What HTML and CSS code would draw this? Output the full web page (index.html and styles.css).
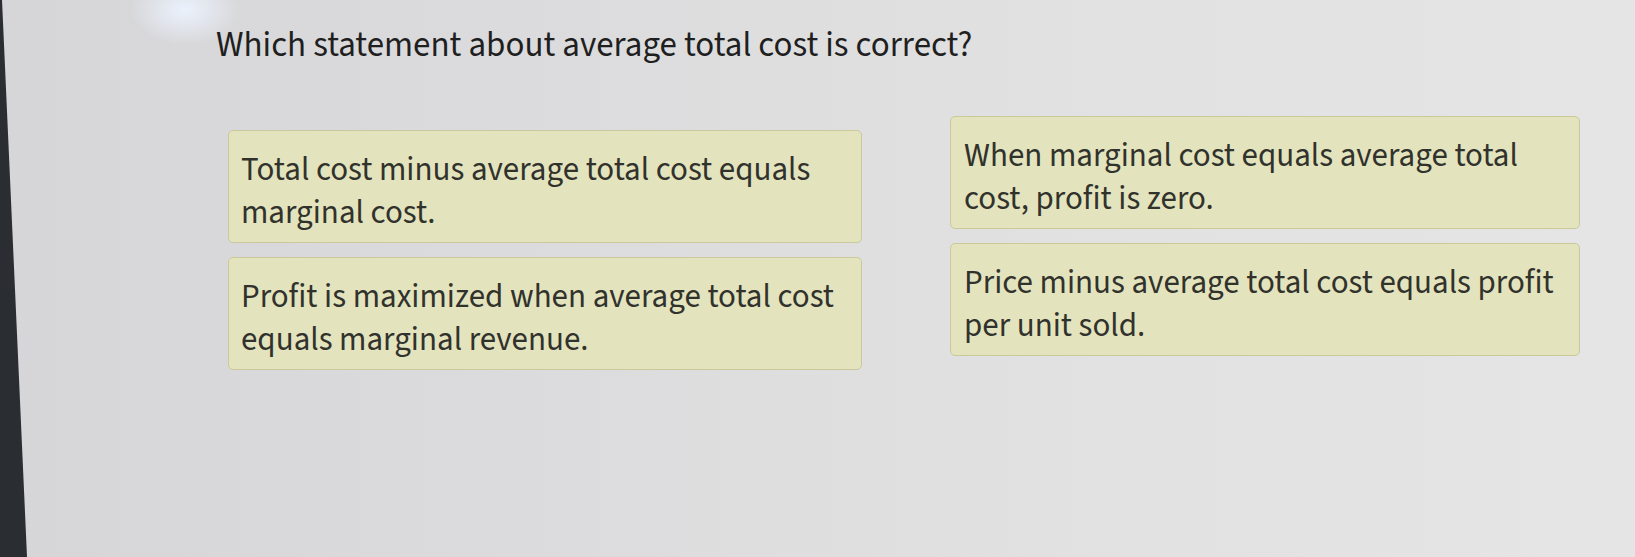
FILE: index.html
```html
<!DOCTYPE html>
<html lang="en">
<head>
<meta charset="utf-8">
<title>Average total cost</title>
<link rel="stylesheet" href="styles.css">
</head>
<body>
<main class="screen">
  <h1 class="question">Which statement about average total cost is correct?</h1>
  <div class="options">
    <div class="col col-left">
      <div class="option">Total cost minus average total cost equals marginal cost.</div>
      <div class="option">Profit is maximized when average total cost equals marginal revenue.</div>
    </div>
    <div class="col col-right">
      <div class="option">When marginal cost equals average total cost, profit is zero.</div>
      <div class="option">Price minus average total cost equals profit per unit sold.</div>
    </div>
  </div>
</main>
</body>
</html>
```

FILE: styles.css
```css
html, body {
  margin: 0;
  padding: 0;
}
body {
  width: 1635px;
  height: 557px;
  overflow: hidden;
  font-family: "Source Sans 3", "Source Sans Pro", Lato, "Noto Sans", sans-serif;
  color: #2e2e2c;
}
.screen {
  position: relative;
  box-sizing: border-box;
  height: 557px;
  padding: 22px 0 0 216px;
  background:
    radial-gradient(ellipse 55px 35px at 185px 10px, rgba(236,243,255,0.95), rgba(236,243,255,0) 100%),
    linear-gradient(90deg, #d6d6d8 0%, #dbdbdd 30%, #e2e2e2 70%, #e5e5e5 100%);
}
.screen::before {
  content: "";
  position: absolute;
  left: 0;
  top: 0;
  width: 30px;
  height: 100%;
  background: #2a2d31;
  clip-path: polygon(0 0, 2px 0, 27px 100%, 0 100%);
}
.question {
  margin: 0;
  font-size: 35px;
  font-weight: 400;
  line-height: 46px;
  color: #1f1f1f;
}
.options {
  display: flex;
  gap: 88px;
  margin-top: 62px;
  margin-left: 12px;
}
.col {
  display: flex;
  flex-direction: column;
  gap: 14px;
  width: 634px;
}
.col-right {
  margin-top: -14px;
  width: 630px;
}
.option {
  box-sizing: border-box;
  height: 113px;
  padding: 17px 12px 0 12px;
  background: #e3e4bd;
  border: 1.5px solid #cbc89b;
  border-radius: 5px;
  font-size: 33px;
  line-height: 43px;
  color: #32322d;
}
.col-right .option {
  padding-left: 13px;
}
```
